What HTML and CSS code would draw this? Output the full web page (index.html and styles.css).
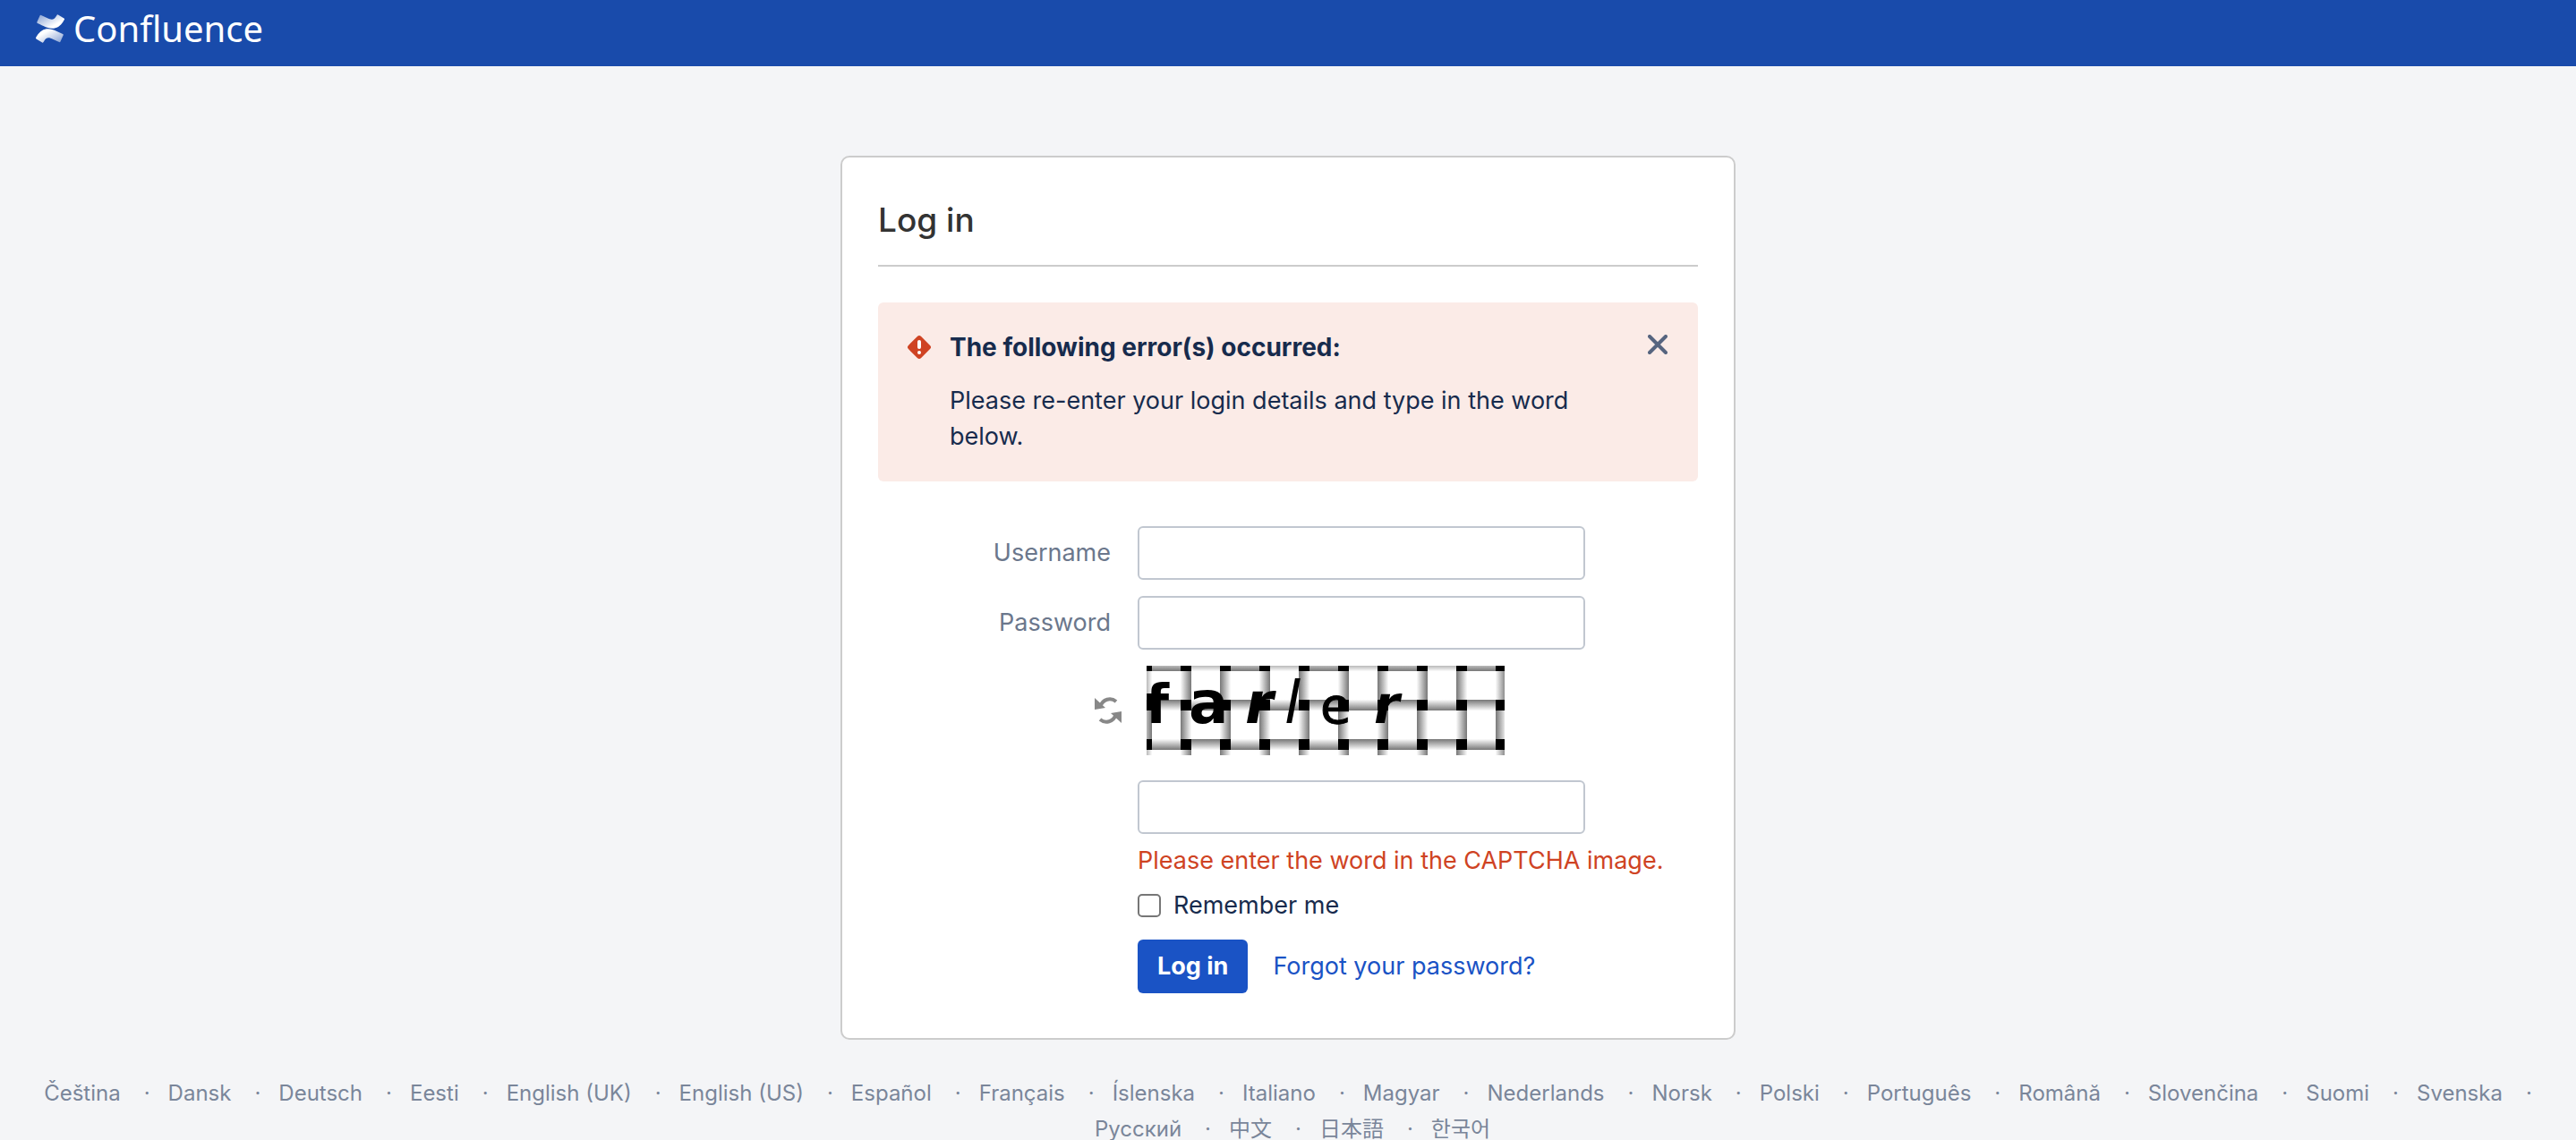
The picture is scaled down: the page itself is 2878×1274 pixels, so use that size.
FILE: index.html
```
<!DOCTYPE html>
<html lang="en">
<head>
  <meta charset="UTF-8">
  <meta name="viewport" content="width=device-width, initial-scale=1.0">
  <title>Log in - Confluence</title>
  <link rel="stylesheet" href="styles.css">
</head>
<body>
  <header class="header">
    <a class="logo" href="/">
      <svg class="logo-mark" viewBox="0 0 24 24" aria-hidden="true">
        <defs>
          <linearGradient id="logoBottom" x1="0.3" y1="0.3" x2="1" y2="0.9">
            <stop offset="0" stop-color="#fff"/>
            <stop offset="1" stop-color="#fff" stop-opacity="0.5"/>
          </linearGradient>
          <linearGradient id="logoTop" x1="0.7" y1="0.7" x2="0" y2="0.1">
            <stop offset="0" stop-color="#fff"/>
            <stop offset="1" stop-color="#fff" stop-opacity="0.5"/>
          </linearGradient>
        </defs>
        <path fill="url(#logoBottom)" d="M.87 18.257c-.248.382-.53.875-.763 1.245a.764.764 0 0 0 .255 1.04l4.965 3.054a.764.764 0 0 0 1.058-.26c.199-.332.454-.763.733-1.221 1.967-3.247 3.945-2.853 7.508-1.146l4.957 2.337a.764.764 0 0 0 1.028-.382l2.364-5.346a.764.764 0 0 0-.382-1 599.851 599.851 0 0 1-4.965-2.361C10.911 10.97 5.224 11.185.87 18.257z"/>
        <path fill="url(#logoTop)" d="M23.131 5.743c.249-.405.531-.875.764-1.25a.764.764 0 0 0-.256-1.034L18.675.404a.764.764 0 0 0-1.058.26c-.195.335-.451.763-.734 1.225-1.966 3.246-3.945 2.85-7.508 1.146L4.437.694a.764.764 0 0 0-1.027.382L1.046 6.422a.764.764 0 0 0 .382 1c1.039.49 3.105 1.467 4.965 2.361 6.698 3.246 12.392 3.029 16.738-4.04z"/>
      </svg>
      <span>Confluence</span>
    </a>
  </header>

  <main class="card">
    <h1>Log in</h1>

    <div class="alert" role="alert">
      <svg class="alert-icon" viewBox="0 0 28 28" aria-hidden="true">
        <rect x="4" y="4" width="20" height="20" rx="3" fill="#cf4323" transform="rotate(45 14 14)"/>
        <path d="M14 8v6" stroke="#fff" stroke-width="4" stroke-linecap="round"/>
        <circle cx="14" cy="20" r="2" fill="#fff"/>
      </svg>
      <div class="alert-text">
        <p class="alert-title">The following error(s) occurred:</p>
        <p>Please re-enter your login details and type in the word below.</p>
      </div>
      <button class="close" type="button" aria-label="Close">
        <svg viewBox="0 0 22 22" aria-hidden="true">
          <path d="M2 2l18 18M20 2L2 20" stroke="#56647f" stroke-width="4" stroke-linecap="round"/>
        </svg>
      </button>
    </div>

    <form id="loginForm">
      <div class="field">
        <label for="username">Username</label>
        <input type="text" id="username" name="os_username">
      </div>
      <div class="field">
        <label for="password">Password</label>
        <input type="password" id="password" name="os_password">
      </div>
      <div class="captcha">
        <button class="refresh" type="button" aria-label="Refresh captcha">
          <svg viewBox="0 0 30 30" aria-hidden="true">
            <g fill="none" stroke="#888" stroke-width="4">
              <path d="M6 11C9 2 18 0 24 5"/>
              <path d="M24 19C21 28 12 30 6 25"/>
            </g>
            <path fill="#888" d="M0 1v13l12-2zM30 29V16l-12 2z"/>
          </svg>
        </button>
        <svg class="captcha-image" viewBox="0 0 400 100" role="img">
          <defs>
            <linearGradient id="strapX">
              <stop offset="0" stop-color="#777"/>
              <stop offset="0.22" stop-color="#fff"/>
              <stop offset="0.78" stop-color="#fff"/>
              <stop offset="1" stop-color="#777"/>
            </linearGradient>
            <linearGradient id="strapY" x2="0" y2="1">
              <stop offset="0" stop-color="#777"/>
              <stop offset="0.22" stop-color="#fff"/>
              <stop offset="0.78" stop-color="#fff"/>
              <stop offset="1" stop-color="#777"/>
            </linearGradient>
            <!-- woven straps, two by two crossings per tile -->
            <pattern id="weave" x="-6" y="-6" width="88" height="88" patternUnits="userSpaceOnUse">
              <rect width="88" height="88"/>
              <rect x="0" y="12" width="56" height="32" fill="url(#strapX)"/>
              <rect x="44" y="56" width="56" height="32" fill="url(#strapX)"/>
              <rect x="-44" y="56" width="56" height="32" fill="url(#strapX)"/>
              <rect x="56" y="0" width="32" height="56" fill="url(#strapY)"/>
              <rect x="12" y="44" width="32" height="56" fill="url(#strapY)"/>
              <rect x="12" y="-44" width="32" height="56" fill="url(#strapY)"/>
            </pattern>
          </defs>
          <rect width="400" height="100" fill="url(#weave)"/>
          <g class="captcha-word">
            <text class="bold" x="-1" y="64" font-size="60">f</text>
            <text class="bold" x="47" y="64" font-size="66">a</text>
            <text class="bold slant" x="110" y="64" font-size="64">r</text>
            <text class="slant" x="154" y="64" font-size="65">l</text>
            <text class="thick" x="194" y="64" font-size="56">e</text>
            <text class="bold slant" x="254" y="64" font-size="58">r</text>
          </g>
        </svg>
      </div>
      <div class="indent">
        <input class="captcha-input" type="text" name="captcha_response" aria-label="Captcha">
        <p class="error">Please enter the word in the CAPTCHA image.</p>
        <label class="remember">
          <input type="checkbox" name="os_cookie">
          Remember me
        </label>
        <div class="actions">
          <button class="submit" type="submit">Log in</button>
          <a href="/forgotuserpassword">Forgot your password?</a>
        </div>
      </div>
    </form>
  </main>

  <footer>
    <ul class="languages">
      <li><a href="#">Čeština</a></li>
      <li><a href="#">Dansk</a></li>
      <li><a href="#">Deutsch</a></li>
      <li><a href="#">Eesti</a></li>
      <li><a href="#">English (UK)</a></li>
      <li><a href="#">English (US)</a></li>
      <li><a href="#">Español</a></li>
      <li><a href="#">Français</a></li>
      <li><a href="#">Íslenska</a></li>
      <li><a href="#">Italiano</a></li>
      <li><a href="#">Magyar</a></li>
      <li><a href="#">Nederlands</a></li>
      <li><a href="#">Norsk</a></li>
      <li><a href="#">Polski</a></li>
      <li><a href="#">Português</a></li>
      <li><a href="#">Română</a></li>
      <li><a href="#">Slovenčina</a></li>
      <li><a href="#">Suomi</a></li>
      <li><a href="#">Svenska</a></li>
      <li><a href="#">Русский</a></li>
      <li><a href="#" lang="zh">中文</a></li>
      <li><a href="#" lang="ja">日本語</a></li>
      <li><a href="#" lang="ko">한국어</a></li>
    </ul>
  </footer>
</body>
</html>
```
FILE: styles.css
```
* {
  box-sizing: border-box;
}
body {
  margin: 0;
  background-color: #f4f5f7;
  color: #172b4d;
  font-family: Inter, "Noto Sans CJK SC", "Noto Sans CJK KR", sans-serif;
  font-size: 27px;
  line-height: 40px;
}
p {
  margin: 0;
}
a {
  color: #1a53c5;
  text-decoration: none;
}
a:hover {
  text-decoration: underline;
}
svg {
  display: block;
}
button {
  font: inherit;
  border: none;
  cursor: pointer;
}

/* Header */
.header {
  display: flex;
  height: 74px;
  padding: 0 40px 10px;
  background-color: #194bab;
}
.logo {
  display: flex;
  align-items: center;
  gap: 10px;
  color: white;
  font-family: "Noto Sans", sans-serif;
  font-size: 40px;
}
.logo-mark {
  width: 32px;
  height: 32px;
}

/* Login card */
.card {
  max-width: 1000px;
  margin: 100px auto 40px;
  padding: 40px 40px 50px;
  background-color: white;
  border: 2px solid #ccc;
  border-radius: 10px;
}
h1 {
  margin: 0 0 40px;
  padding: 6px 0 26px;
  border-bottom: 2px solid #ccc;
  color: #333;
  font-size: 37px;
  font-weight: 500;
  line-height: 48px;
}
.alert {
  display: flex;
  align-items: flex-start;
  gap: 20px;
  margin-bottom: 50px;
  padding: 30px 34px 30px 32px;
  background-color: #fbebe7;
  border-radius: 6px;
}
.alert-icon {
  flex: none;
  width: 28px;
  height: 28px;
  margin-top: 6px;
}
.alert-text {
  flex: 1;
}
.alert-title {
  margin-bottom: 20px;
  font-size: 28px;
  font-weight: 700;
}
.close {
  padding: 6px 0;
  background: none;
}
.close svg {
  width: 22px;
  height: 22px;
}

/* Form */
.field {
  display: grid;
  grid-template-columns: 260px 1fr;
  gap: 30px;
  align-items: center;
  margin-bottom: 18px;
}
.field label {
  color: #6b778c;
  text-align: right;
}
input[type="text"],
input[type="password"] {
  display: block;
  width: 500px;
  max-width: 100%;
  height: 60px;
  padding: 0 10px;
  background-color: white;
  border: 2px solid #c1c7d0;
  border-radius: 6px;
  font: inherit;
}
input[type="text"]:focus,
input[type="password"]:focus {
  border-color: #4c9aff;
  outline: none;
}
.captcha {
  display: flex;
  align-items: center;
  gap: 28px;
  margin-bottom: 28px;
  padding-left: 242px;
}
.refresh {
  padding: 0;
  background: none;
}
.refresh svg {
  width: 30px;
  height: 30px;
}
.captcha-image {
  width: 400px;
  height: 100px;
}
.captcha-word {
  font-family: "DejaVu Sans", sans-serif;
}
.bold {
  font-weight: bold;
}
.slant {
  font-style: oblique;
}
.thick {
  stroke: black;
  stroke-width: 1px;
}
.indent {
  padding-left: 290px;
}
.error {
  margin: 10px 0;
  color: #cf4323;
}
.remember {
  display: flex;
  align-items: center;
  gap: 14px;
}
.remember input {
  appearance: none;
  width: 26px;
  height: 26px;
  margin: 0;
  background-color: white;
  border: 2px solid #767676;
  border-radius: 5px;
}
.remember input:checked {
  background-color: #1a53c5;
}
.actions {
  display: flex;
  align-items: center;
  gap: 28px;
  margin-top: 18px;
}
.submit {
  height: 60px;
  padding: 0 22px;
  background-color: #1a53c5;
  border-radius: 6px;
  color: white;
  font-weight: 700;
}
.submit:hover {
  background-color: #0747a6;
}

/* Language list */
.languages {
  display: flex;
  flex-wrap: wrap;
  justify-content: center;
  margin: 0;
  padding: 0 20px;
  list-style: none;
  font-size: 24px;
}
.languages li {
  padding: 0 10px;
}
.languages a {
  color: #7a869a;
}
.languages li::after {
  content: "·";
  margin-left: 26px;
  color: #7a869a;
}
.languages li:last-child {
  padding-right: 0;
}
.languages li:last-child::after {
  content: none;
}
```
